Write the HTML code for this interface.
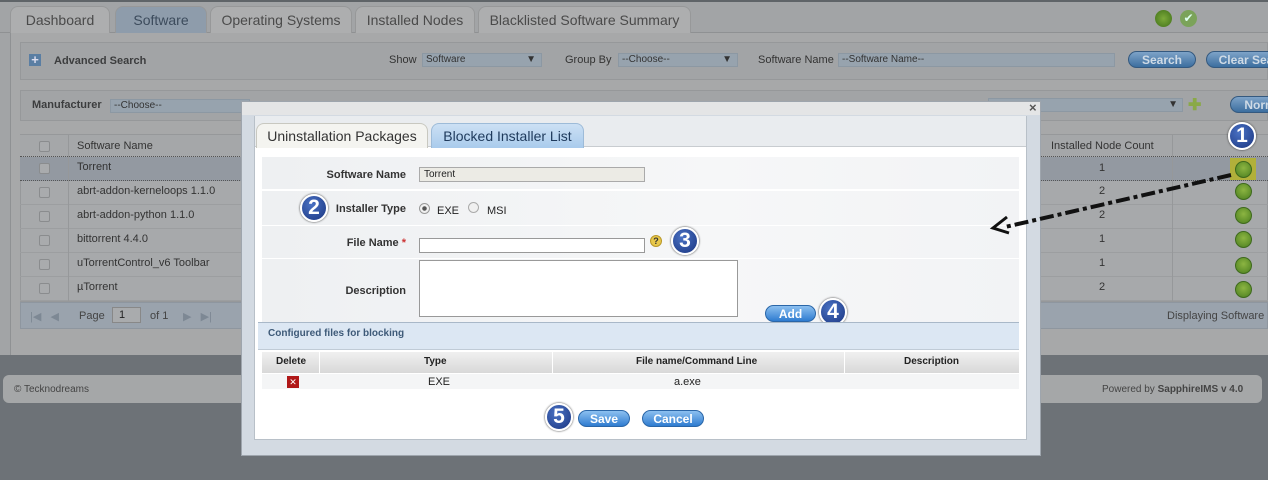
<!DOCTYPE html>
<html><head><style>
*{margin:0;padding:0;box-sizing:border-box}
body{width:1268px;height:480px;overflow:hidden;background:#6d7277;font-family:"Liberation Sans",Arial,sans-serif;position:relative;font-size:11px;color:#222}
.a{position:absolute}
.tab{position:absolute;top:6px;height:27px;background:#adaeaf;border:1px solid #979899;border-bottom:none;border-radius:8px 8px 0 0;font-size:14px;color:#4a4a4a;text-align:center;line-height:26px}
.sel{background:#97a3ae;border:1px solid #8c98a3;font-size:10px;color:#333;line-height:12px;padding-left:3px;height:14px}
.btn{position:absolute;height:17px;border-radius:9px;background:linear-gradient(#7ea3c8,#3c6e9f);color:#cfdbe6;font-weight:bold;font-size:12px;text-align:center;line-height:16px;border:1px solid #34597f}
.bbtn{position:absolute;height:17px;border-radius:9px;background:linear-gradient(#8cc0f0,#2f7cd0);color:#fff;font-weight:bold;font-size:12px;text-align:center;line-height:16px;border:1px solid #2a66a8}
.row{position:absolute;left:20px;width:1248px;height:24px;border-bottom:1px solid #9c9ea0;font-size:11px;color:#333}
.cb{position:absolute;left:19px;top:6px;width:11px;height:11px;border:1px solid #8a8c8e;background:#a9abad;border-radius:2px}
.dot{position:absolute;left:1235px;width:17px;height:17px;border-radius:50%;background:radial-gradient(circle at 50% 40%,#8cb542,#4b7e1f);border:1px solid #3e6a1d}
.num{position:absolute;width:28px;height:28px;border-radius:50%;background:radial-gradient(circle at 40% 35%,#4a72c4,#1a3580);border:2px solid #fff;box-shadow:0 0 2px #333;color:#fff;font-weight:bold;font-size:21px;text-align:center;line-height:24px}
.lbl{position:absolute;font-weight:bold;font-size:11px;color:#333;text-align:right}
.band{position:absolute;left:262px;width:757px;background:linear-gradient(90deg,#eef0f2,#f6f7f8 60%,#f2f3f5)}
</style></head><body>
<div class="a" style="left:0;top:0;width:1268px;height:355px;background:#a2a4a6"></div>
<div class="a" style="left:0;top:0;width:1268px;height:2px;background:#5f6468"></div>
<div class="a" style="left:0;top:32px;width:1268px;height:1px;background:#8f9193"></div>
<div class="tab" style="left:10px;width:100px">Dashboard</div>
<div class="tab" style="left:115px;width:92px;background:#8e9cab;color:#3c4b5c">Software</div>
<div class="tab" style="left:210px;width:142px">Operating Systems</div>
<div class="tab" style="left:355px;width:120px">Installed Nodes</div>
<div class="tab" style="left:478px;width:213px">Blacklisted Software Summary</div>
<div class="a" style="left:1155px;top:10px;width:17px;height:17px;border-radius:50%;background:radial-gradient(#7caa3a,#40701a)"></div>
<div class="a" style="left:1180px;top:10px;width:17px;height:17px;border-radius:50%;background:#7ba35a;color:#dfe;font-size:12px;text-align:center;line-height:17px">✔</div>
<div class="a" style="left:10px;top:33px;width:1258px;height:322px;background:#a7a8a9;border-left:1px solid #8f9193"></div>
<div class="a" style="left:20px;top:42px;width:1248px;height:38px;background:#a2a4a6;border:1px solid #96989a"></div>
<div class="a" style="left:29px;top:54px;width:12px;height:12px;background:#5a7ea3;color:#dde;font-size:13px;font-weight:bold;line-height:11px;text-align:center">+</div>
<div class="a" style="left:54px;top:55px;font-size:11px;font-weight:bold;color:#3c3d3e">Advanced Search</div>
<div class="a" style="left:389px;top:54px;color:#333">Show</div>
<div class="a sel" style="left:422px;top:53px;width:120px">Software<span style="float:right;padding-right:5px">▼</span></div>
<div class="a" style="left:565px;top:54px;color:#333">Group By</div>
<div class="a sel" style="left:618px;top:53px;width:120px">--Choose--<span style="float:right;padding-right:5px">▼</span></div>
<div class="a" style="left:758px;top:54px;color:#333">Software Name</div>
<div class="a sel" style="left:838px;top:53px;width:277px">--Software Name--</div>
<div class="btn" style="left:1128px;top:51px;width:68px">Search</div>
<div class="btn" style="left:1206px;top:51px;width:80px">Clear Sea</div>
<div class="a" style="left:20px;top:90px;width:1248px;height:31px;background:#a2a4a6;border:1px solid #96989a"></div>
<div class="a" style="left:32px;top:99px;font-weight:bold;color:#3c3d3e">Manufacturer</div>
<div class="a sel" style="left:110px;top:99px;width:140px">--Choose--</div>
<div class="a sel" style="left:988px;top:98px;width:195px"><span style="float:right;padding-right:4px">▼</span></div>
<div class="a" style="left:1188px;top:95px;color:#8aa948;font-size:16px;font-weight:bold">✚</div>
<div class="btn" style="left:1230px;top:96px;width:60px">Norm</div>
<div class="a" style="left:20px;top:134px;width:1248px;height:168px;background:#a7a9ab;border:1px solid #96989a"></div>
<div class="row" style="top:135px;height:22px;background:#a5a7a9;border-bottom:1px dotted #555"><div class="cb"></div><span class="a" style="left:57px;top:5px">Software Name</span><span class="a" style="left:1031px;top:5px">Installed Node Count</span></div>
<div class="row" style="top:157px;background:#9399a1;border-bottom:1px dotted #555"><div class="cb"></div><span class="a" style="left:57px;top:4px">Torrent</span><span class="a" style="left:1079px;top:5px">1</span></div>
<div class="row" style="top:181px"><div class="cb"></div><span class="a" style="left:57px;top:4px">abrt-addon-kerneloops 1.1.0</span><span class="a" style="left:1079px;top:4px">2</span></div>
<div class="row" style="top:205px"><div class="cb"></div><span class="a" style="left:57px;top:4px">abrt-addon-python 1.1.0</span><span class="a" style="left:1079px;top:4px">2</span></div>
<div class="row" style="top:229px"><div class="cb"></div><span class="a" style="left:57px;top:4px">bittorrent 4.4.0</span><span class="a" style="left:1079px;top:4px">1</span></div>
<div class="row" style="top:253px"><div class="cb"></div><span class="a" style="left:57px;top:4px">uTorrentControl_v6 Toolbar</span><span class="a" style="left:1079px;top:4px">1</span></div>
<div class="row" style="top:277px"><div class="cb"></div><span class="a" style="left:57px;top:4px">µTorrent</span><span class="a" style="left:1079px;top:4px">2</span></div>
<div class="a" style="left:68px;top:135px;width:1px;height:166px;background:#96989a"></div>
<div class="a" style="left:1172px;top:135px;width:1px;height:166px;background:#96989a"></div>
<div class="a" style="left:1230px;top:158px;width:26px;height:22px;background:#b1b03a"></div>
<div class="dot" style="top:161px"></div><div class="dot" style="top:183px"></div><div class="dot" style="top:207px"></div><div class="dot" style="top:231px"></div><div class="dot" style="top:257px"></div><div class="dot" style="top:281px"></div>
<div class="a" style="left:20px;top:302px;width:1248px;height:27px;background:#9aa3ad;border:1px solid #8e969f"></div>
<div class="a" style="left:30px;top:310px;color:#7d8894;font-size:11px">|◀ &nbsp; ◀</div>
<div class="a" style="left:79px;top:310px;color:#444">Page</div>
<div class="a" style="left:112px;top:307px;width:29px;height:16px;background:#a9abad;border:1px solid #888;padding-left:6px;line-height:14px">1</div>
<div class="a" style="left:150px;top:310px;color:#444">of 1</div>
<div class="a" style="left:183px;top:310px;color:#7d8894">▶ &nbsp; ▶|</div>
<div class="a" style="left:1167px;top:310px;color:#444">Displaying Software</div>
<div class="a" style="left:3px;top:375px;width:1259px;height:28px;background:#a5a7a8;border-radius:6px"></div>
<div class="a" style="left:14px;top:384px;font-size:10px;color:#444">© Tecknodreams</div>
<div class="a" style="left:1102px;top:384px;font-size:10px;color:#444">Powered by <b>SapphireIMS v 4.0</b></div>
<!-- modal -->
<div class="a" style="left:241px;top:101px;width:800px;height:355px;background:#d3dae2;border:1px solid #9ea5ad"></div>
<div class="a" style="left:242px;top:102px;width:798px;height:13px;background:#e4e5e6"></div>
<div class="a" style="left:1029px;top:100px;font-size:13px;font-weight:bold;color:#555">×</div>
<div class="a" style="left:254px;top:116px;width:773px;height:324px;background:#fff;border:1px solid #b8c0c8"></div>
<div class="a" style="left:255px;top:116px;width:771px;height:31px;background:#e9ecef;border-bottom:1px solid #c8ccd0"></div>
<div class="a" style="left:256px;top:123px;width:172px;height:25px;background:#f4f4f0;border:1px solid #c8c8c0;border-bottom:none;border-radius:8px 8px 0 0;font-size:14px;color:#333;text-align:center;line-height:24px">Uninstallation Packages</div>
<div class="a" style="left:431px;top:123px;width:153px;height:25px;background:linear-gradient(#cce0f4,#a9cbec);border:1px solid #9dbbd8;border-bottom:none;border-radius:8px 8px 0 0;font-size:14px;color:#1f3a5c;text-align:center;line-height:24px">Blocked Installer List</div>
<div class="band" style="top:157px;height:32px"></div>
<div class="band" style="top:191px;height:34px"></div>
<div class="band" style="top:226px;height:32px"></div>
<div class="band" style="top:259px;height:63px"></div>
<div class="lbl" style="left:300px;top:169px;width:106px">Software Name</div>
<div class="a" style="left:419px;top:167px;width:226px;height:15px;background:#ecebe5;border:1px solid #aaa;font-size:10px;padding-left:4px;line-height:13px">Torrent</div>
<div class="num" style="left:300px;top:194px">2</div>
<div class="lbl" style="left:300px;top:203px;width:106px">Installer Type</div>
<div class="a" style="left:419px;top:203px;width:11px;height:11px;border-radius:50%;border:1px solid #999;background:radial-gradient(#555 30%,#f0f0f0 40%)"></div>
<div class="a" style="left:437px;top:205px;font-size:11px">EXE</div>
<div class="a" style="left:468px;top:202px;width:11px;height:11px;border-radius:50%;border:1px solid #aaa;background:#f0f0f0"></div>
<div class="a" style="left:487px;top:205px;font-size:11px">MSI</div>
<div class="lbl" style="left:300px;top:237px;width:106px">File Name <span style="color:#c33">*</span></div>
<div class="a" style="left:419px;top:238px;width:226px;height:15px;background:#fff;border:1px solid #999"></div>
<div class="a" style="left:650px;top:235px;width:12px;height:12px;border-radius:50%;background:#e8c84a;border:1px solid #b9982a;font-size:9px;font-weight:bold;text-align:center;line-height:11px;color:#333">?</div>
<div class="num" style="left:671px;top:227px">3</div>
<div class="lbl" style="left:300px;top:285px;width:106px">Description</div>
<div class="a" style="left:419px;top:260px;width:319px;height:57px;background:#fff;border:1px solid #999"></div>
<div class="bbtn" style="left:765px;top:305px;width:51px">Add</div>
<div class="num" style="left:819px;top:298px">4</div>
<div class="a" style="left:258px;top:322px;width:761px;height:28px;background:#dce7f3;border-top:1px solid #a9b8c8;border-bottom:1px solid #c0cbd6"></div>
<div class="a" style="left:268px;top:328px;font-size:10px;font-weight:bold;color:#3e5a78">Configured files for blocking</div>
<div class="a" style="left:262px;top:352px;width:757px;height:21px;background:linear-gradient(#f0f0f0,#d8d8d8)"></div>
<div class="a" style="left:319px;top:352px;width:1px;height:21px;background:#fff"></div>
<div class="a" style="left:552px;top:352px;width:1px;height:21px;background:#fff"></div>
<div class="a" style="left:844px;top:352px;width:1px;height:21px;background:#fff"></div>
<div class="a" style="left:276px;top:356px;font-weight:bold;font-size:10px">Delete</div>
<div class="a" style="left:424px;top:356px;font-weight:bold;font-size:10px">Type</div>
<div class="a" style="left:636px;top:356px;font-weight:bold;font-size:10px">File name/Command Line</div>
<div class="a" style="left:904px;top:356px;font-weight:bold;font-size:10px">Description</div>
<div class="a" style="left:262px;top:374px;width:757px;height:15px;background:#f4f5f6"></div>
<div class="a" style="left:287px;top:376px;width:12px;height:12px;background:#b01818;color:#fff;font-size:9px;text-align:center;line-height:12px">✕</div>
<div class="a" style="left:428px;top:376px;font-size:11px">EXE</div>
<div class="a" style="left:674px;top:376px;font-size:11px">a.exe</div>
<div class="num" style="left:545px;top:403px">5</div>
<div class="bbtn" style="left:578px;top:410px;width:52px">Save</div>
<div class="bbtn" style="left:642px;top:410px;width:62px">Cancel</div>
<!-- arrow on top -->
<svg class="a" style="left:985px;top:165px" width="260" height="75"><path d="M246 10 L20 62" stroke="#111" stroke-width="4" stroke-dasharray="14 4 4 4"/><path d="M22 52 L8 63 L24 68" fill="none" stroke="#111" stroke-width="3"/></svg>
<div class="num" style="left:1228px;top:122px">1</div>
</body></html>
